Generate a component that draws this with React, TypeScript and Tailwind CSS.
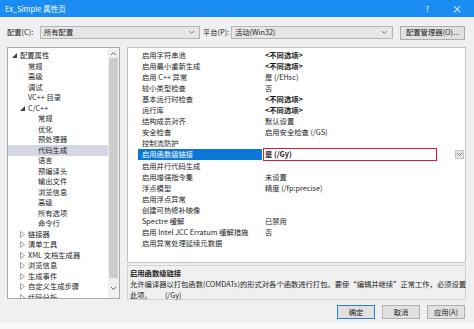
const FONT = { fontFamily: '"Noto Sans CJK SC", "Noto Sans", sans-serif' };

type TreeItem = { t: string; lvl: 0 | 1 | 2; exp?: "open" | "closed"; sel?: boolean };

const TREE: TreeItem[] = [
  { t: "配置属性", lvl: 0, exp: "open" },
  { t: "常规", lvl: 1 },
  { t: "高级", lvl: 1 },
  { t: "调试", lvl: 1 },
  { t: "VC++ 目录", lvl: 1 },
  { t: "C/C++", lvl: 1, exp: "open" },
  { t: "常规", lvl: 2 },
  { t: "优化", lvl: 2 },
  { t: "预处理器", lvl: 2 },
  { t: "代码生成", lvl: 2, sel: true },
  { t: "语言", lvl: 2 },
  { t: "预编译头", lvl: 2 },
  { t: "输出文件", lvl: 2 },
  { t: "浏览信息", lvl: 2 },
  { t: "高级", lvl: 2 },
  { t: "所有选项", lvl: 2 },
  { t: "命令行", lvl: 2 },
  { t: "链接器", lvl: 1, exp: "closed" },
  { t: "清单工具", lvl: 1, exp: "closed" },
  { t: "XML 文档生成器", lvl: 1, exp: "closed" },
  { t: "浏览信息", lvl: 1, exp: "closed" },
  { t: "生成事件", lvl: 1, exp: "closed" },
  { t: "自定义生成步骤", lvl: 1, exp: "closed" },
  { t: "代码分析", lvl: 1, exp: "closed" },
];

const INDENT = ["pl-[4px]", "pl-[12px]", "pl-[22px]"];

type Prop = { n: string; v: string; b?: boolean; sel?: boolean };

const PROPS: Prop[] = [
  { n: "启用字符串池", v: "<不同选项>", b: true },
  { n: "启用最小重新生成", v: "<不同选项>", b: true },
  { n: "启用 C++ 异常", v: "是 (/EHsc)" },
  { n: "较小类型检查", v: "否" },
  { n: "基本运行时检查", v: "<不同选项>", b: true },
  { n: "运行库", v: "<不同选项>", b: true },
  { n: "结构成员对齐", v: "默认设置" },
  { n: "安全检查", v: "启用安全检查 (/GS)" },
  { n: "控制流防护", v: "" },
  { n: "启用函数级链接", v: "是 (/Gy)", b: true, sel: true },
  { n: "启用并行代码生成", v: "" },
  { n: "启用增强指令集", v: "未设置" },
  { n: "浮点模型", v: "精度 (/fp:precise)" },
  { n: "启用浮点异常", v: "" },
  { n: "创建可热修补映像", v: "" },
  { n: "Spectre 缓解", v: "已禁用" },
  { n: "启用 Intel JCC Erratum 缓解措施", v: "否" },
  { n: "启用异常处理延续元数据", v: "" },
];

function Chevron({ up = false, color = "#7a7a7a" }: { up?: boolean; color?: string }) {
  return (
    <svg width="7" height="5" viewBox="0 0 7 5">
      <polyline
        points={up ? "1,4 3.5,1.5 6,4" : "1,1 3.5,3.5 6,1"}
        fill="none"
        stroke={color}
        strokeWidth="1"
      />
    </svg>
  );
}

function Arrow({ exp }: { exp?: "open" | "closed" }) {
  if (exp === "open")
    return (
      <svg width="5" height="5" viewBox="0 0 5 5">
        <polygon points="5,0 5,5 0,5" fill="#404040" />
      </svg>
    );
  if (exp === "closed")
    return (
      <svg width="5" height="7" viewBox="0 0 5 7">
        <polygon points="0.5,0.5 4.5,3.5 0.5,6.5" fill="none" stroke="#8a8a8a" strokeWidth="0.8" />
      </svg>
    );
  return null;
}

function Combo({ w, text }: { w: string; text: string }) {
  return (
    <div className={`${w} h-[13px] flex items-center justify-between bg-[#e6e6e6] border border-[#b4b4b4] pl-[3px] pr-[4px]`}>
      <span>{text}</span>
      <Chevron />
    </div>
  );
}

function Btn({ text, main = false }: { text: string; main?: boolean }) {
  return (
    <div
      className={`w-[38px] h-[14px] flex items-center justify-center bg-[#e1e1e1] border ${
        main ? "border-[#2a7fd4]" : "border-[#b0b0b0]"
      }`}
    >
      {text}
    </div>
  );
}

export default function App() {
  return (
    <div style={FONT} className="w-[474px] h-[329px] flex flex-col text-[7.3px] text-[#1b1b1b] overflow-hidden">
      {/* Title bar */}
      <div className="h-[17px] bg-[#1a8cf2] flex items-center justify-between pl-[5px] pr-[12px] text-white text-[7.5px]">
        <span>Ex_Simple 属性页</span>
        <div className="flex items-center gap-[23px] text-[8px]">
          <span>?</span>
          <span className="text-[10px] leading-none">×</span>
        </div>
      </div>

      <div className="flex-1 bg-[#f0f0f0] px-[7px] pt-[9px] flex flex-col">
        {/* Toolbar */}
        <div className="h-[13px] flex items-center">
          <span className="w-[33px]">配置(C):</span>
          <Combo w="w-[160px]" text="所有配置" />
          <span className="w-[28px] ml-[3px]">平台(P):</span>
          <Combo w="w-[162px]" text="活动(Win32)" />
          <div className="ml-[7px] w-[65px] h-[14px] flex items-center justify-center bg-[#e1e1e1] border border-[#adadad]">
            配置管理器(O)...
          </div>
        </div>

        {/* Main */}
        <div className="mt-[8px] h-[253px] flex items-start">
          {/* Tree */}
          <div className="w-[113px] h-[252px] bg-white border border-[#a9a9a9] flex">
            <div className="flex-1 pt-[2.5px] overflow-hidden">
              {TREE.map((it, i) => (
                <div
                  key={i}
                  className={`h-[10.5px] flex items-center ${INDENT[it.lvl]} ${it.sel ? "bg-[#d5d8e3]" : ""}`}
                >
                  <div className="w-[8px] flex items-center">
                    <Arrow exp={it.exp} />
                  </div>
                  <span className="whitespace-nowrap">{it.t}</span>
                </div>
              ))}
            </div>
            <div className="w-[11px] bg-[#f0f0f0] flex flex-col items-center">
              <div className="h-[10px] flex items-center">
                <Chevron up color="#606060" />
              </div>
              <div className="w-[9px] h-[220px] bg-[#cdcdcd]" />
              <div className="flex-1 flex items-center">
                <Chevron color="#606060" />
              </div>
            </div>
          </div>

          {/* Right column */}
          <div className="ml-[7px] w-[339px] flex flex-col">
            <div className="h-[216px] bg-white border border-[#bfbfbf] pt-[1.5px] overflow-hidden">
              {PROPS.map((p, i) => (
                <div key={i} className="h-[11.1px] flex items-center pl-[10px]">
                  <div
                    className={`w-[124px] h-full flex items-center pl-[4px] whitespace-nowrap ${
                      p.sel ? "bg-[#0a78d7] text-white" : ""
                    }`}
                  >
                    {p.n}
                  </div>
                  {p.sel ? (
                    <>
                      <div className="ml-[1px] w-[174px] h-[13px] border-[1.5px] border-[#cf1f3a] flex items-center pl-[1px] font-bold">
                        {p.v}
                      </div>
                      <div className="ml-auto mr-[1px] w-[9px] h-[9px] bg-[#e6e6e6] border border-[#c3c3c3] flex items-center justify-center">
                        <Chevron />
                      </div>
                    </>
                  ) : (
                    <div className={`ml-[1px] pl-[2px] whitespace-nowrap ${p.b ? "font-bold" : ""}`}>{p.v}</div>
                  )}
                </div>
              ))}
            </div>
            <div className="mt-[2px] h-[35px] border border-[#d2d2d2] bg-[#f0f0f0] pl-[2px] pt-[2px] leading-[11px] whitespace-nowrap">
              <div className="font-bold">启用函数级链接</div>
              <div>允许编译器以打包函数(COMDATs)的形式对各个函数进行打包。要使“编辑并继续”正常工作，必须设置</div>
              <div>
                此项。<span className="ml-[13px]">(/Gy)</span>
              </div>
            </div>
          </div>
        </div>

        {/* Buttons */}
        <div className="mt-[5px] flex justify-end gap-[7px] pr-[2px]">
          <Btn text="确定" main />
          <Btn text="取消" />
          <Btn text="应用(A)" />
        </div>
      </div>
      <div className="h-[6px] bg-[#f8f8f8]" />
    </div>
  );
}
